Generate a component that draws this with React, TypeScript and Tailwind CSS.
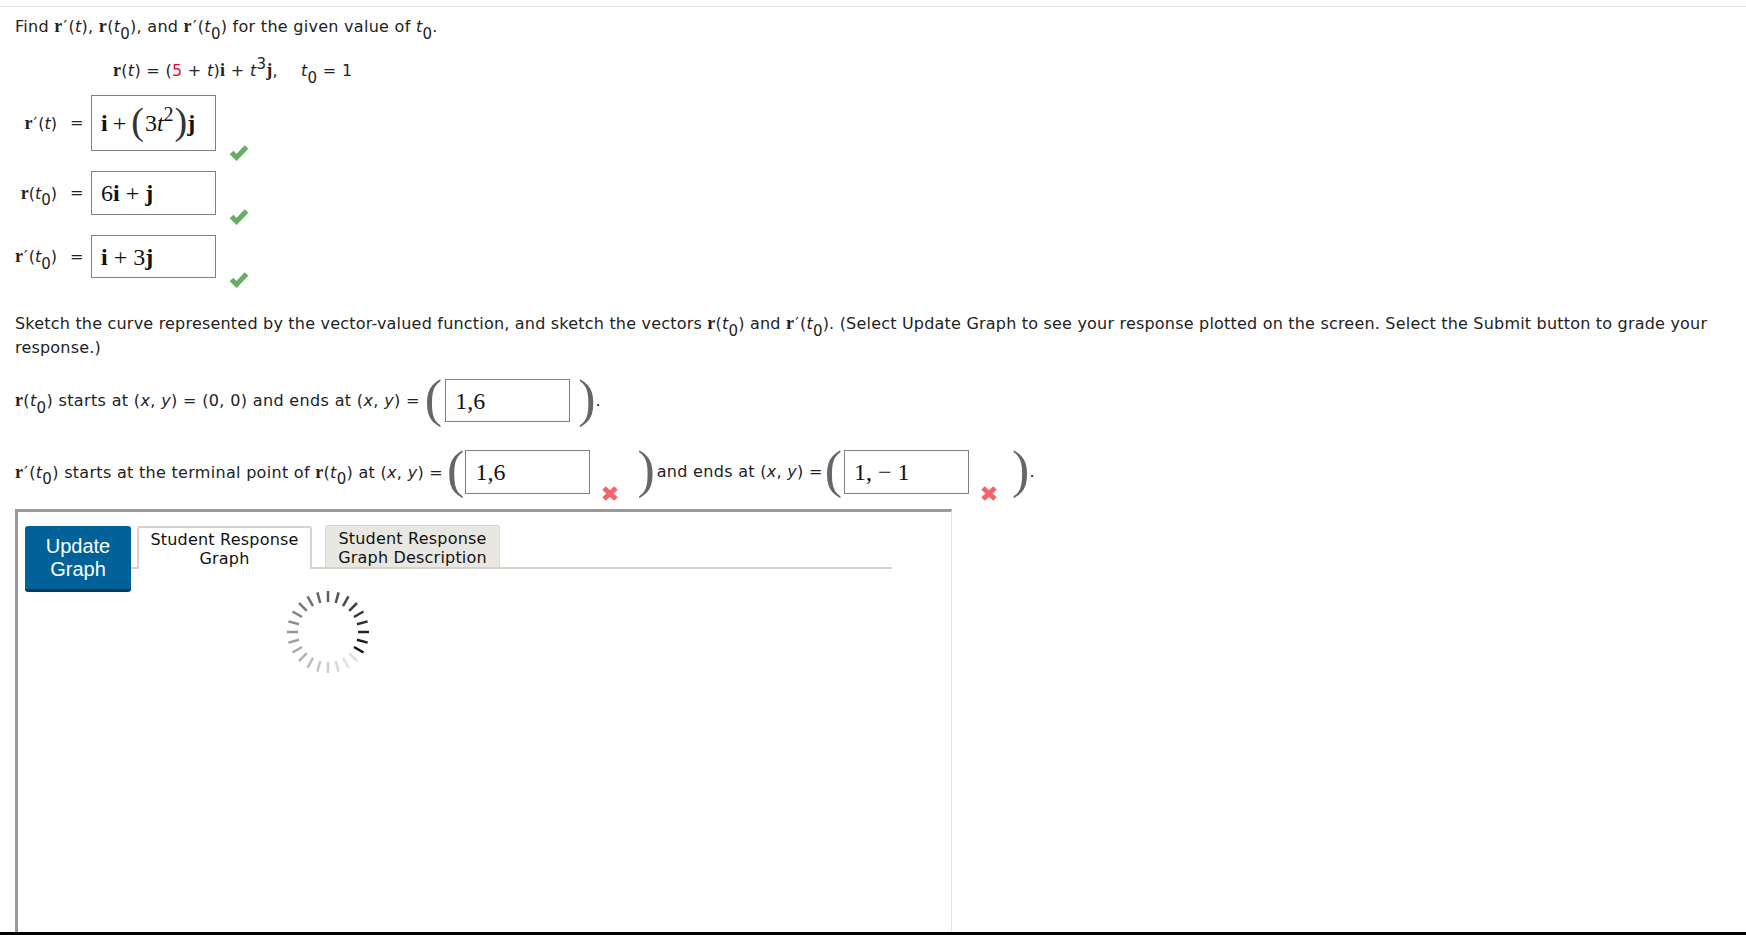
const B = ({ children }: { children: React.ReactNode }) => (
  <b className="font-['Liberation_Serif',serif] text-[18px] font-bold">{children}</b>
);

const RP = () => (
  <>
    <B>r</B>
    <span className="ml-[1px] mr-[1px]">′</span>
  </>
);

const T0 = () => (
  <>
    <i>t</i>
    <sub className="text-[15px] align-[-3px] leading-[0]">0</sub>
  </>
);

const Check = () => (
  <svg width="20" height="17" viewBox="0 0 20 17" className="self-end ml-[13px] -mb-[10px] shrink-0">
    <path d="M2.5 8.5 L7.5 13.5 L17.5 3" fill="none" stroke="#66ad66" strokeWidth="5" />
  </svg>
);

const Cross = () => (
  <svg width="18" height="17" viewBox="0 0 18 17" className="self-end ml-[11px] -mb-[8px] shrink-0">
    <path d="M3 3 L15 14 M15 3 L3 14" fill="none" stroke="#f2636c" strokeWidth="5" />
  </svg>
);

const Paren = ({ c }: { c: string }) => (
  <span className="block h-[40px] font-['Liberation_Serif',serif] text-[52px] leading-[36px] tracking-normal text-[#666]">{c}</span>
);

const MathBox = ({ value, h, w = "w-[125px]" }: { value: React.ReactNode; h: string; w?: string }) => (
  <div className={`${w} ${h} shrink-0 border border-[#808080] pl-[9px] flex items-center font-['Liberation_Serif',serif] text-[24px] tracking-normal text-[#111] whitespace-nowrap`}>
    {value}
  </div>
);

const Row = ({ label, box, h, mt }: { label: React.ReactNode; box: React.ReactNode; h: string; mt: string }) => (
  <div className={`flex items-center ${mt}`}>
    <div className="w-[42px] flex justify-end whitespace-nowrap tracking-normal">{label}</div>
    <div className="ml-[13px] w-[21px]">=</div>
    <MathBox value={box} h={h} />
    <Check />
  </div>
);

const Spinner = () => {
  const ticks = Array.from({ length: 24 }, (_, i) => i);
  return (
    <svg width="90" height="90" viewBox="-45 -45 90 90" className="ml-[152px] mt-[18px]">
      {ticks.map((i) => {
        // darkest tick sits at the lower right, fades going backwards round the ring
        const age = (24 + 8 - i) % 24;
        return (
          <line
            key={i}
            x1="0"
            y1="-30"
            x2="0"
            y2="-41"
            stroke="#111"
            strokeWidth="2.5"
            opacity={Math.max(0.12, 1 - age * 0.04)}
            transform={`rotate(${i * 15})`}
          />
        );
      })}
    </svg>
  );
};

export default function App() {
  return (
    <div className="h-[935px] flex flex-col overflow-hidden border-b-[3px] border-black bg-white text-[16px] tracking-[0.3px] leading-[24px] text-[#222] font-['DejaVu_Sans',sans-serif]">
      <div className="mt-[6px] border-t border-[#e3e3e3]" />
      <div className="flex-1 min-h-0 flex flex-col pl-[15px] pr-[30px]">
        <div className="mt-[7px] h-[24px] whitespace-nowrap tracking-[0.28px]">
          Find <RP />(<i>t</i>), <B>r</B>(<T0 />), and <RP />(<T0 />) for the given value of <T0 />.
        </div>
        <div className="mt-[20px] h-[24px] pl-[98px] whitespace-nowrap">
          <B>r</B>(<i>t</i>) = (<span className="text-[#e8112d]">5</span> + <i>t</i>)<B>i</B> + <i>t</i>
          <sup className="text-[15px] leading-[0]">3</sup>
          <B>j</B>,<span className="ml-[23px]"><T0 /></span> = 1
        </div>

        <Row
          mt="mt-[13px]"
          h="h-[56px]"
          label={<span><RP />(<i>t</i>)</span>}
          box={
            <>
              <b>i</b>
              <span className="ml-[5px]">+</span>
              <span className="text-[38px] leading-none ml-[5px] -mt-[4px] text-[#333]">(</span>
              <span className="ml-[1px]">3<i>t</i><sup className="text-[20px] leading-[0]">2</sup></span>
              <span className="text-[38px] leading-none ml-[1px] -mt-[4px] text-[#333]">)</span>
              <b>j</b>
            </>
          }
        />
        <Row
          mt="mt-[20px]"
          h="h-[44px]"
          label={<span><B>r</B>(<T0 />)</span>}
          box={<>6<b>i</b>&nbsp;+&nbsp;<b>j</b></>}
        />
        <Row
          mt="mt-[20px]"
          h="h-[43px]"
          label={<span><RP />(<T0 />)</span>}
          box={<><b>i</b>&nbsp;+&nbsp;3<b>j</b></>}
        />

        <p className="mt-[33px] tracking-[0.2px]">
          Sketch the curve represented by the vector-valued function, and sketch the vectors <B>r</B>(<T0 />) and <RP />(<T0 />). (Select Update Graph to see your response plotted on the screen. Select the Submit button to grade your response.)
        </p>

        <div className="mt-[19px] flex items-center whitespace-nowrap tracking-[0.35px]">
          <span><B>r</B>(<T0 />) starts at (<i>x</i>, <i>y</i>) = (0, 0) and ends at (<i>x</i>, <i>y</i>) =</span>
          <span className="ml-[5px] mr-[3px]"><Paren c="(" /></span>
          <MathBox value="1,6" h="h-[43px]" />
          <span className="ml-[8px]"><Paren c=")" /></span>.
        </div>

        <div className="mt-[28px] flex items-center whitespace-nowrap">
          <span><RP />(<T0 />) starts at the terminal point of <B>r</B>(<T0 />) at (<i>x</i>, <i>y</i>) =</span>
          <span className="ml-[4px] mr-[1px]"><Paren c="(" /></span>
          <MathBox value="1,6" h="h-[44px]" />
          <Cross />
          <span className="ml-[18px] mr-[2px]"><Paren c=")" /></span>
          <span>and ends at (<i>x</i>, <i>y</i>) =</span>
          <span className="ml-[2px] mr-[2px]"><Paren c="(" /></span>
          <MathBox value={<>1,&nbsp;−&nbsp;1</>} h="h-[44px]" />
          <Cross />
          <span className="ml-[14px]"><Paren c=")" /></span>.
        </div>

        <div className="mt-[15px] flex-1 min-h-0 w-[937px] border-t-[3px] border-l-[3px] border-t-[#999] border-l-[#999] border-r border-r-[#e5e5e5] pl-[7px] pt-[14px] flex items-start">
          <button className="w-[106px] h-[66px] rounded-[3px] border-b-[3px] border-[#003a5c] bg-[#006298] text-white text-[20px] tracking-normal leading-[23px] font-['Liberation_Sans',sans-serif]">
            Update
            <br />
            Graph
          </button>
          <div className="flex flex-col">
            <div className="w-[761px] h-[43px] border-b-2 border-[#d5d2ca] flex items-end pl-[6px] text-[#111] tracking-[0.2px] leading-[19px] text-center">
              <div className="w-[175px] h-[43px] -mb-[2px] rounded-t-[3px] border-2 border-b-0 border-[#d5d2ca] bg-white pt-[2px]">
                Student Response
                <br />
                Graph
              </div>
              <div className="ml-[13px] w-[175px] h-[42px] rounded-t-[3px] border border-b-0 border-[#dbd8d0] bg-[#e9e7e1] pt-[3px]">
                Student Response
                <br />
                Graph Description
              </div>
            </div>
            <Spinner />
          </div>
        </div>
      </div>
    </div>
  );
}
